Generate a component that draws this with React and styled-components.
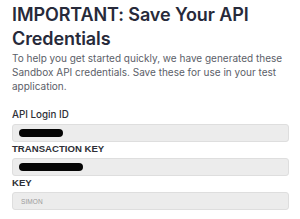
import React from "react";
import styled, { createGlobalStyle } from "styled-components";

const Global = createGlobalStyle`
  html, body { margin: 0; padding: 0; background: #ffffff; }
  body { font-family: Inter, "Noto Sans", sans-serif; }
`;

const Page = styled.div`
  padding: 3px 11px 0 12px;
  display: flex;
  flex-direction: column;
`;

const Title = styled.h1`
  margin: 0;
  font-family: Inter, sans-serif;
  font-weight: 600;
  font-size: 18px;
  line-height: 24px;
  color: #272a3a;
  letter-spacing: -0.1px;
`;

const Intro = styled.p`
  margin: 0;
  font-family: Inter, sans-serif;
  font-size: 10px;
  line-height: 14px;
  color: #5b5e68;
`;

const Form = styled.div`
  margin-top: 16px;
  display: flex;
  flex-direction: column;
`;

const Label = styled.div`
  font-family: ${(p) => (p.$plain ? '"Liberation Sans", Arial, sans-serif' : "Inter, sans-serif")};
  font-weight: ${(p) => (p.$plain ? 700 : 500)};
  font-size: ${(p) => (p.$plain ? "9.6px" : "9.8px")};
  line-height: 12px;
  color: #2e2f36;
`;

const Field = styled.div`
  margin-top: 3px;
  margin-bottom: 1px;
  height: 16px;
  border: 1px solid #dedede;
  border-radius: 3px;
  background: #ececec;
  display: flex;
  align-items: center;
  padding-left: 6px;
`;

const Redacted = styled.span`
  display: block;
  height: 8px;
  border-radius: 4px;
  background: #050505;
`;

const Value = styled.span`
  padding-left: 2px;
  font-family: "Liberation Sans", Arial, sans-serif;
  font-size: 6.5px;
  color: #9a9a9a;
  letter-spacing: 0.1px;
`;

export default function App() {
  return (
    <>
      <Global />
      <Page>
        <Title>IMPORTANT: Save Your API Credentials</Title>
        <Intro>
          To help you get started quickly, we have generated these Sandbox API
          credentials. Save these for use in your test application.
        </Intro>
        <Form>
          <Label>API Login ID</Label>
          <Field>
            <Redacted style={{ width: 44 }} />
          </Field>
          <Label $plain>TRANSACTION KEY</Label>
          <Field>
            <Redacted style={{ width: 64 }} />
          </Field>
          <Label $plain>KEY</Label>
          <Field>
            <Value>SIMON</Value>
          </Field>
        </Form>
      </Page>
    </>
  );
}
